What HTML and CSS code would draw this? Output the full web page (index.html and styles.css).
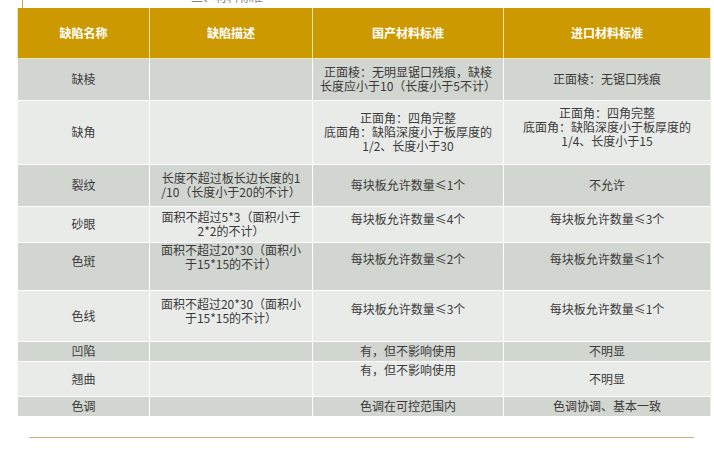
FILE: index.html
```html
<!DOCTYPE html>
<html lang="zh">
<head>
<meta charset="utf-8">
<title>缺陷标准</title>
<link rel="stylesheet" href="styles.css">
</head>
<body>
<div class="intro"><span class="intro-text">二、材料标准</span></div>
<table class="spec">
  <colgroup>
    <col class="c1"><col class="c2"><col class="c3"><col class="c4">
  </colgroup>
  <thead>
    <tr class="h-head">
      <th>缺陷名称</th><th>缺陷描述</th><th>国产材料标准</th><th>进口材料标准</th>
    </tr>
  </thead>
  <tbody>
    <tr class="dark h42">
      <td>缺棱</td><td></td>
      <td>正面棱：无明显锯口残痕，缺棱<br>长度应小于10（长度小于5不计）</td>
      <td>正面棱：无锯口残痕</td>
    </tr>
    <tr class="light h64">
      <td>缺角</td><td></td>
      <td>正面角：四角完整<br>底面角：缺陷深度小于板厚度的<br>1/2、长度小于30</td>
      <td class="top pt5">正面角：四角完整<br>底面角：缺陷深度小于板厚度的<br>1/4、长度小于15</td>
    </tr>
    <tr class="dark h42">
      <td>裂纹</td>
      <td>长度不超过板长边长度的1<br>/10（长度小于20的不计）</td>
      <td>每块板允许数量≤1个</td>
      <td>不允许</td>
    </tr>
    <tr class="light h36">
      <td>砂眼</td>
      <td>面积不超过5*3（面积小于<br>2*2的不计）</td>
      <td class="top pt5">每块板允许数量≤4个</td>
      <td class="top pt5">每块板允许数量≤3个</td>
    </tr>
    <tr class="dark h48">
      <td class="top pt11">色斑</td>
      <td class="top pt0">面积不超过20*30（面积小<br>于15*15的不计）</td>
      <td class="top pt9">每块板允许数量≤2个</td>
      <td class="top pt9">每块板允许数量≤1个</td>
    </tr>
    <tr class="light h51">
      <td>色线</td>
      <td class="top pt6">面积不超过20*30（面积小<br>于15*15的不计）</td>
      <td class="top pt11">每块板允许数量≤3个</td>
      <td class="top pt11">每块板允许数量≤1个</td>
    </tr>
    <tr class="dark h20">
      <td>凹陷</td><td></td>
      <td>有，但不影响使用</td>
      <td>不明显</td>
    </tr>
    <tr class="light h35">
      <td>翘曲</td><td></td>
      <td class="top pt1">有，但不影响使用</td>
      <td>不明显</td>
    </tr>
    <tr class="dark h20">
      <td>色调</td><td></td>
      <td>色调在可控范围内</td>
      <td>色调协调、基本一致</td>
    </tr>
  </tbody>
</table>
<div class="rule"></div>
</body>
</html>
```

FILE: styles.css
```css
html, body {
  margin: 0;
  padding: 0;
  background: #ffffff;
}

body {
  font-family: "Noto Sans CJK SC", "Noto Sans", "Liberation Sans", sans-serif;
  font-size: 12px;
  color: #3a3a3a;
  width: 714px;
  height: 453px;
  overflow: hidden;
}

.intro {
  margin-left: 22px;
  height: 8px;
  border-left: 1px solid #bfa35a;
  overflow: hidden;
  width: 400px;
}

.intro-text {
  display: block;
  margin-top: -10px;
  padding-left: 168px;
  line-height: 14px;
  color: #888888;
}

.spec {
  margin-left: 17px;
  width: 693px;
  border-collapse: collapse;
  table-layout: fixed;
}

.c1 { width: 132px; }
.c2 { width: 163px; }
.c3 { width: 191px; }
.c4 { width: 207px; }

.spec th {
  background: #cc9900;
  color: #ffffff;
  font-weight: bold;
  border: 1px solid #f2e4b0;
  border-top: none;
  text-align: center;
  vertical-align: middle;
  padding: 0;
}

.spec td {
  border: 1px solid #ffffff;
  text-align: center;
  vertical-align: middle;
  padding: 0 2px;
  line-height: 14px;
  white-space: nowrap;
}

.spec td:last-child {
  border-right: 1px solid #f2ead0;
}

.dark td { background: #d2d6d0; }
.light td { background: #e9ebe8; }

.h-head { height: 50px; }
.h20 { height: 20px; }
.h35 { height: 35px; }
.h36 { height: 36px; }
.h42 { height: 42px; }
.h48 { height: 48px; }
.h51 { height: 51px; }
.h64 { height: 64px; }

.spec td.top { vertical-align: top; }
.spec td.pt0 { padding-top: 0; }
.spec td.pt1 { padding-top: 1px; }
.spec td.pt5 { padding-top: 5px; }
.spec td.pt6 { padding-top: 6px; }
.spec td.pt9 { padding-top: 9px; }
.spec td.pt11 { padding-top: 11px; }

.rule {
  margin: 20px 0 0 29px;
  width: 665px;
  height: 1px;
  background: #c8b47c;
}
```
